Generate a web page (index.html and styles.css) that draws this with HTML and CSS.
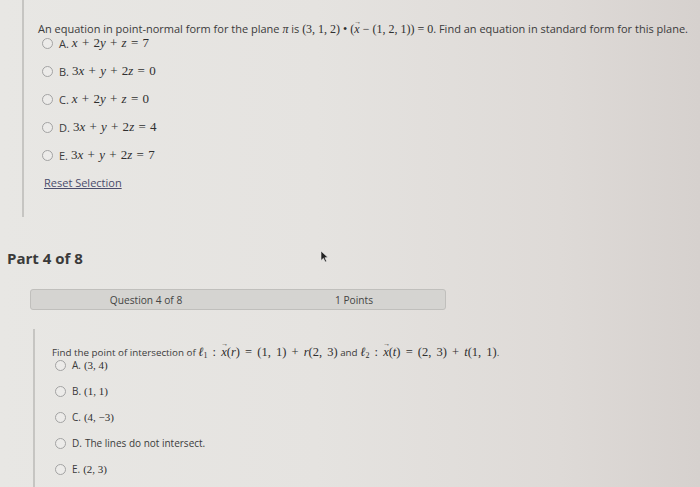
FILE: index.html
```html
<!DOCTYPE html>
<html>
<head>
<meta charset="utf-8">
<link rel="stylesheet" href="styles.css">
</head>
<body>
<div class="page">
  <section class="q q1">
    <div class="prompt">An equation in point-normal form for the plane <span class="m"><i>π</i></span> is <span class="m">(3, 1, 2) • (<span class="vec">x</span> − (1, 2, 1)) = 0</span>. Find an equation in standard form for this plane.</div>
    <ul class="opts">
      <li><span class="radio"></span><span class="lbl">A.</span><span class="m"><i>x</i> + 2<i>y</i> + <i>z</i> = 7</span></li>
      <li><span class="radio"></span><span class="lbl">B.</span><span class="m">3<i>x</i> + <i>y</i> + 2<i>z</i> = 0</span></li>
      <li><span class="radio"></span><span class="lbl">C.</span><span class="m"><i>x</i> + 2<i>y</i> + <i>z</i> = 0</span></li>
      <li><span class="radio"></span><span class="lbl">D.</span><span class="m">3<i>x</i> + <i>y</i> + 2<i>z</i> = 4</span></li>
      <li><span class="radio"></span><span class="lbl">E.</span><span class="m">3<i>x</i> + <i>y</i> + 2<i>z</i> = 7</span></li>
    </ul>
    <a class="reset">Reset Selection</a>
  </section>

  <h2 class="part">Part 4 of 8</h2>
  <svg class="cursor" width="9" height="13" viewBox="0 0 9 13"><path d="M1 1 L1 10.5 L3.4 8.3 L5.2 12 L6.6 11.3 L4.9 7.7 L8 7.6 Z" fill="#222" stroke="#eee" stroke-width="0.6"/></svg>

  <div class="qbar"><span class="cell">Question 4 of 8</span><span class="cell">1 Points</span></div>

  <section class="q q2">
    <div class="prompt">Find the point of intersection of <span class="m"><i>ℓ</i><sub>1</sub> : <span class="vec">x</span>(<i>r</i>) = (1, 1) + <i>r</i>(2, 3)</span> and <span class="m"><i>ℓ</i><sub>2</sub> : <span class="vec">x</span>(<i>t</i>) = (2, 3) + <i>t</i>(1, 1)</span>.</div>
    <ul class="opts">
      <li><span class="radio"></span><span class="lbl">A.</span><span class="m">(3, 4)</span></li>
      <li><span class="radio"></span><span class="lbl">B.</span><span class="m">(1, 1)</span></li>
      <li><span class="radio"></span><span class="lbl">C.</span><span class="m">(4, −3)</span></li>
      <li><span class="radio"></span><span class="lbl">D.</span><span>The lines do not intersect.</span></li>
      <li><span class="radio"></span><span class="lbl">E.</span><span class="m">(2, 3)</span></li>
    </ul>
  </section>
</div>
</body>
</html>
```

FILE: styles.css
```css
html, body {
  margin: 0;
  padding: 0;
}
body {
  width: 700px;
  height: 487px;
  overflow: hidden;
  font-family: "Open Sans", "Noto Sans", sans-serif;
  color: #3b3b3b;
  background: linear-gradient(90deg, #e8e7e4 0%, #e5e3e0 45%, #dedad7 80%, #d6d1ce 100%);
}
.page {
  position: relative;
  height: 487px;
  overflow: hidden;
}
.q {
  border-left: 2px solid #c6c5c2;
}
.q1 {
  margin-left: 22px;
  padding: 22px 0 27px 14px;
}
.prompt {
  font-size: 11px;
  line-height: 14px;
  white-space: nowrap;
}
.m {
  font-family: "Liberation Serif", "DejaVu Serif", serif;
  font-size: 12px;
  color: #2f2f2f;
}
.m i {
  font-style: italic;
}
.m sub {
  font-size: 8px;
  vertical-align: -2px;
  line-height: 0;
}
.vec {
  position: relative;
  font-style: italic;
}
.vec::after {
  content: "→";
  position: absolute;
  left: 0;
  top: -7px;
  font-size: 7px;
  font-style: normal;
}
.opts {
  list-style: none;
  margin: 0;
  padding: 0 0 0 4px;
}
.opts li {
  display: flex;
  align-items: center;
  height: 14px;
  margin-bottom: 14px;
  font-size: 11px;
}
.opts .m {
  font-size: 13px;
  word-spacing: 1px;
}
.radio {
  width: 9px;
  height: 9px;
  border: 1px solid #a3a3a3;
  border-radius: 50%;
  background: #ecebe9;
  margin-right: 6px;
  flex: none;
}
.lbl {
  margin-right: 3px;
}
.reset {
  display: block;
  margin-left: 6px;
  font-size: 11px;
  line-height: 14px;
  color: #4a4c6c;
  text-decoration: underline;
}
.part {
  margin: 32px 0 0 7px;
  font-size: 15px;
  line-height: 18px;
  font-weight: 700;
  color: #3a3a3a;
}
.cursor {
  position: absolute;
  left: 320px;
  top: 250px;
}
.qbar {
  display: grid;
  grid-template-columns: 230px 186px;
  align-items: center;
  box-sizing: border-box;
  width: 416px;
  height: 21px;
  margin: 22px 0 0 30px;
  border: 1px solid #c0bfbc;
  border-radius: 3px;
  background: #d5d4d1;
  font-size: 10.2px;
  color: #444;
}
.cell {
  text-align: center;
}
.q2 {
  margin: 19px 0 0 33px;
  padding: 17px 0 0 17px;
  height: 160px;
}
.q2 .prompt {
  font-size: 9.8px;
  line-height: 12px;
}
.q2 .prompt .m {
  font-size: 12.5px;
  word-spacing: 2px;
}
.q2 .opts {
  padding-left: 3px;
}
.q2 .opts li {
  height: 12px;
  font-size: 10px;
}
.q2 .opts .m {
  font-size: 11px;
  word-spacing: 0;
}
```
